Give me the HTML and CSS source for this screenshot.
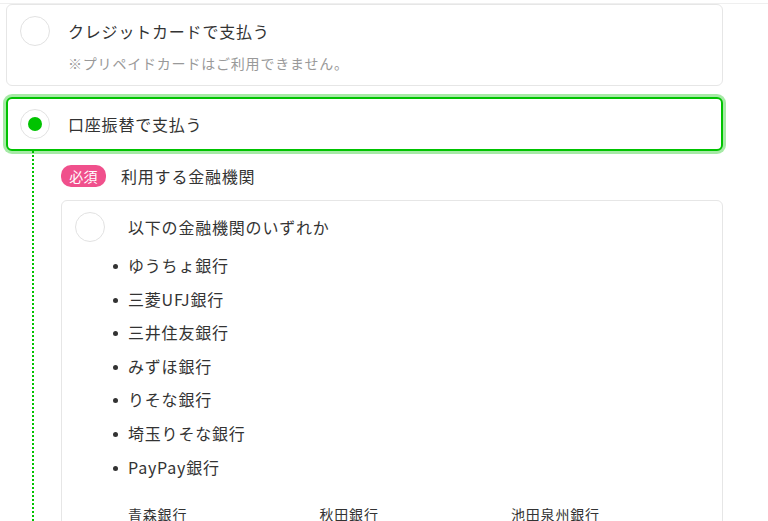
FILE: index.html
```html
<html lang="ja">
<head>
    <meta charset="UTF-8">
    <meta name="viewport" content="width=device-width, initial-scale=1.0">
    <title>お支払い方法</title>
    <link rel="stylesheet" href="styles.css">
</head>
<body>
    <div class="topline"></div>
    <div class="options">
        <div class="option">
            <div class="radio"></div>
            <div class="option-text">
                <div class="option-title">クレジットカードで支払う</div>
                <div class="option-note">※プリペイドカードはご利用できません。</div>
            </div>
        </div>

        <div class="option selected">
            <div class="radio"><span class="dot"></span></div>
            <div class="option-title">口座振替で支払う</div>
        </div>

        <div class="detail">
            <div class="field-label">
                <span class="badge">必須</span>
                <span>利用する金融機関</span>
            </div>

            <div class="bank-box">
                <div class="bank-head">
                    <div class="radio"></div>
                    <div class="option-title">以下の金融機関のいずれか</div>
                </div>
                <ul class="bank-list">
                    <li>ゆうちょ銀行</li>
                    <li>三菱UFJ銀行</li>
                    <li>三井住友銀行</li>
                    <li>みずほ銀行</li>
                    <li>りそな銀行</li>
                    <li>埼玉りそな銀行</li>
                    <li>PayPay銀行</li>
                </ul>
                <div class="bank-grid">
                    <div>青森銀行</div>
                    <div>秋田銀行</div>
                    <div>池田泉州銀行</div>
                </div>
            </div>
        </div>
    </div>
</body>
</html>
```

FILE: styles.css
```css
body {
    margin: 0;
    background: #fff;
    color: #333;
    font-family: "Noto Sans CJK JP", "Noto Sans", sans-serif;
    letter-spacing: 0.05em;
    overflow: hidden;
}

.topline {
    height: 3px;
    border-bottom: 1px solid #efefef;
}

.options {
    width: 717px;
    margin-left: 6px;
}

.option {
    display: flex;
    align-items: flex-start;
    gap: 18px;
    border: 1px solid #e6e6e6;
    border-radius: 6px;
    padding: 11px 13px 12px;
    background: #fff;
}

.radio {
    flex: none;
    width: 28px;
    height: 28px;
    border: 1px solid #e2e2e2;
    border-radius: 50%;
    background: #fff;
    display: flex;
    justify-content: center;
    align-items: center;
}

.dot {
    width: 14px;
    height: 14px;
    border-radius: 50%;
    background: #00c300;
}

.option-title {
    font-size: 16px;
    line-height: 30px;
}

.option-note {
    margin-top: 7px;
    font-size: 14px;
    line-height: 20px;
    color: #999;
}

.option.selected {
    margin-top: 11px;
    align-items: center;
    border: 2px solid #00c300;
    box-shadow: 0 0 0 3px rgba(0, 195, 0, 0.35);
    padding: 10px 12px;
}

/* dotted guide under the selected option */
.detail {
    margin-left: 26px;
    border-left: 2px dotted #00c300;
    padding: 14px 0 0 27px;
}

.field-label {
    display: flex;
    align-items: center;
    gap: 15px;
    font-size: 16px;
    height: 22px;
}

.badge {
    display: inline-block;
    width: 45px;
    height: 22px;
    line-height: 22px;
    border-radius: 10px;
    background: #f0508c;
    color: #fff;
    font-size: 14px;
    text-align: center;
    letter-spacing: 0.02em;
}

.bank-box {
    margin-top: 13px;
    border: 1px solid #e6e6e6;
    border-radius: 6px;
    padding: 11px 13px 20px;
}

.bank-head {
    display: flex;
    align-items: center;
    gap: 23px;
}

.bank-list {
    list-style: none;
    margin: 7px 0 0 53px;
    padding: 0;
}

.bank-list li {
    position: relative;
    font-size: 16px;
    line-height: 33.6px;
}

.bank-list li::before {
    content: "";
    position: absolute;
    left: -15px;
    top: 15px;
    width: 5px;
    height: 5px;
    border-radius: 50%;
    background: #333;
}

.bank-grid {
    margin: 20px 0 0 53px;
    display: grid;
    grid-template-columns: repeat(3, 191.5px);
    font-size: 14px;
    line-height: 20px;
}
```
